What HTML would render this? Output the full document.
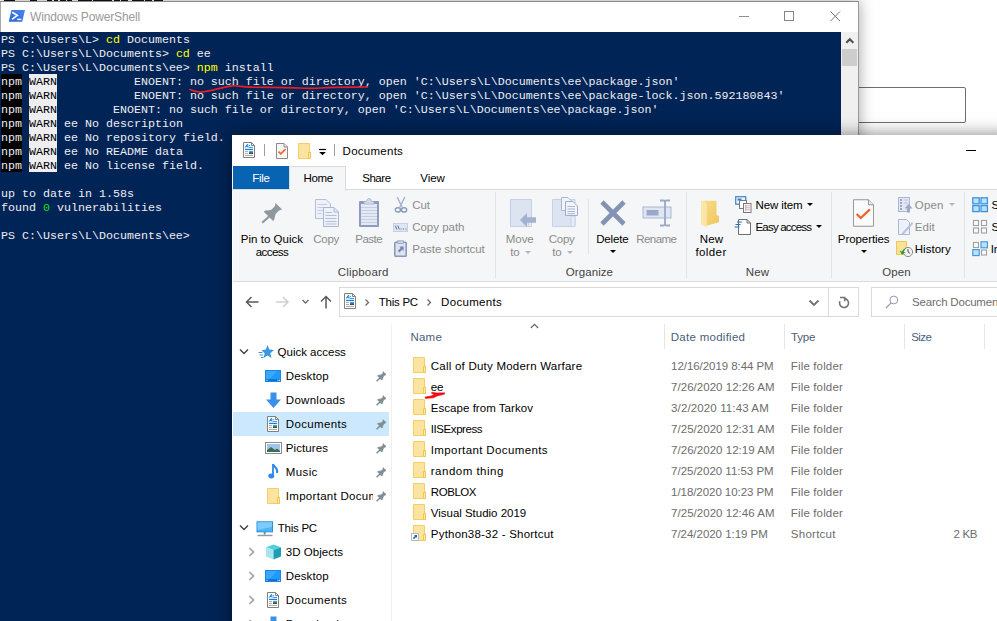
<!DOCTYPE html>
<html>
<head>
<meta charset="utf-8">
<title>Windows PowerShell</title>
<style>
html,body{margin:0;padding:0;}
body{width:997px;height:621px;overflow:hidden;background:#ffffff;position:relative;font-family:"Liberation Sans",sans-serif;font-size:12px;color:#000;}
.abs{position:absolute;}
/* ---------- background page ---------- */
#bgtext{left:0;top:-32px;font-size:40px;font-weight:bold;color:#000;letter-spacing:0;line-height:34px;white-space:nowrap;}
#bginput{left:850px;top:87px;width:114px;height:34px;border:1px solid #6e6e6e;border-radius:2px;background:#fff;}
/* ---------- powershell ---------- */
#ps{left:0;top:1px;width:859px;height:640px;background:#fff;box-shadow:0 0 14px rgba(0,0,0,.36);border-top:1px solid #8a8a8a;border-right:1px solid #9a9a9a;box-sizing:border-box;}
#pstitle{left:30px;top:8px;font-size:12px;letter-spacing:-0.15px;color:#999;white-space:nowrap;}
#con{left:0;top:30px;width:841px;height:600px;background:#012456;}
#con pre{margin:0;position:absolute;left:1px;top:1px;font-family:"Liberation Mono",monospace;font-size:11.67px;line-height:14px;color:#eeedf0;letter-spacing:0;}
#con .y{color:#ffff00;}
#con .n{color:#eeedf0;}
#con .w{color:#000;}
#con .g{color:#13e213;}
#sb{left:841px;top:30px;width:17px;height:600px;background:#f0f0f0;}
#sbthumb{left:1px;top:17px;width:15px;height:17px;background:#cdcdcd;}
/* ---------- explorer ---------- */
#ex{left:232px;top:135px;width:780px;height:500px;background:#fff;box-shadow:0 0 16px rgba(0,0,0,.5);}
.t{position:absolute;white-space:nowrap;line-height:16px;font-size:11.5px;color:#000;}
.g1{color:#8b8b8b;}
.wh{color:#fff;}
.lb{color:#444;}
.hd{color:#4c607a;}
.g2{color:#6d6d6d;}
.sep{position:absolute;width:1px;background:#e2e3e4;}
#ribbon{left:1px;top:54px;width:780px;height:91px;background:#f5f6f7;border-top:1px solid #dadbdc;border-bottom:1px solid #dadbdc;}
#tabfile{left:1px;top:31px;width:56px;height:23px;background:#0963b3;}
#tabhome{left:57px;top:31px;width:55px;height:24px;background:#f5f6f7;border:1px solid #dadbdc;border-bottom:none;}
.tri{position:absolute;width:0;height:0;border-left:3px solid transparent;border-right:3px solid transparent;border-top:3px solid #000;}
.tri.gr{border-top-color:#b5b5b5;}
#addr{left:107px;top:152px;width:520px;height:30px;border:1px solid #d9d9d9;box-sizing:border-box;}
#srch{left:639px;top:152px;width:200px;height:30px;border:1px solid #d9d9d9;box-sizing:border-box;}
#navsel{left:1px;top:277px;width:156px;height:24px;background:#cce8ff;}
</style>
</head>
<body>
<!-- background web page -->
<svg class="abs" style="left:0;top:0" width="170" height="2" viewBox="0 0 170 2"><path d="M4 0.5H15M30 0.5H37M47 0.5H52M54 0.5H58M60 0.5H66M67 0.5H72M78 0.5H92M93 0.5H112M114 0.5H120M121 0.5H128M132 0.5H144M145 0.5H152M154 0.5H163" stroke="#111" stroke-width="1.4"/></svg>
<div id="bginput" class="abs"></div>

<!-- PowerShell window -->
<div id="ps" class="abs">
  <svg class="abs" style="left:8px;top:7px" width="18" height="15" viewBox="0 0 18 15">
    <defs><linearGradient id="psg" x1="0" y1="1" x2="1" y2="0"><stop offset="0" stop-color="#2b66d6"/><stop offset="1" stop-color="#4a86ea"/></linearGradient></defs>
    <path d="M3.4 1H17L14.2 12.7H0.8Z" fill="url(#psg)"/>
    <path d="M4.2 3.2L9.3 6.4L4 10.4" fill="none" stroke="#fff" stroke-width="1.6"/>
    <path d="M9.2 10.4H13.4" stroke="#fff" stroke-width="1.4"/>
  </svg>
  <div class="abs" style="left:0;top:0;width:1px;height:30px;background:#a8a8a8"></div>
  <div id="pstitle" class="abs">Windows PowerShell</div>
  <svg class="abs" style="left:730px;top:0" width="128" height="30" viewBox="0 0 128 30">
    <path d="M9 14.5H19" stroke="#8c8c8c" stroke-width="1"/>
    <rect x="54.5" y="9.5" width="9" height="9" fill="none" stroke="#868686" stroke-width="1"/>
    <path d="M100.5 9.5L110 19M110 9.5L100.5 19" stroke="#7a7a7a" stroke-width="1"/>
  </svg>
  <div id="con" class="abs">
<div class="abs" style="left:1px;top:42px;width:21px;height:98px;background:#000"></div><div class="abs" style="left:29px;top:42px;width:28px;height:98px;background:#eeedf0"></div>
<pre>PS C:\Users\L&gt; <span class="y">cd</span> Documents
PS C:\Users\L\Documents&gt; <span class="y">cd</span> ee
PS C:\Users\L\Documents\ee&gt; <span class="y">npm</span> install
<span class="n">npm</span> <span class="w">WARN</span>           ENOENT: no such file or directory, open 'C:\Users\L\Documents\ee\package.json'
<span class="n">npm</span> <span class="w">WARN</span>           ENOENT: no such file or directory, open 'C:\Users\L\Documents\ee\package-lock.json.592180843'
<span class="n">npm</span> <span class="w">WARN</span>        ENOENT: no such file or directory, open 'C:\Users\L\Documents\ee\package.json'
<span class="n">npm</span> <span class="w">WARN</span> ee No description
<span class="n">npm</span> <span class="w">WARN</span> ee No repository field.
<span class="n">npm</span> <span class="w">WARN</span> ee No README data
<span class="n">npm</span> <span class="w">WARN</span> ee No license field.

up to date in 1.58s
found <span class="g">0</span> vulnerabilities

PS C:\Users\L\Documents\ee&gt; </pre>
    <svg class="abs" style="left:180px;top:44px" width="200" height="24" viewBox="0 0 200 24">
      <path d="M10 13.6C14 15.5 18 16.2 22 16C32 15 42 11 52 9.8C58 9.5 62 11 70 11.2C90 11.5 110 11.3 120 12C128 12.6 132 12.6 140 12C155 11 172 11.2 187.5 11" fill="none" stroke="#ec1c24" stroke-width="1.7" stroke-linecap="round"/>
    </svg>
  </div>
  <div id="sb" class="abs">
    <svg class="abs" style="left:0;top:0" width="16" height="17" viewBox="0 0 16 17"><path d="M5.3 10.8L8.8 7.3L12.3 10.8" fill="none" stroke="#505050" stroke-width="2.2"/></svg>
    <div id="sbthumb" class="abs"></div>
  </div>
</div>

<!-- Explorer window -->
<div id="ex" class="abs">
<svg width="0" height="0" style="position:absolute">
  <defs>
    <symbol id="i-doc" viewBox="0 0 12 16">
      <path d="M0.5 0.5H8.5L11.5 3.5V15.5H0.5Z" fill="#fff" stroke="#808080"/>
      <path d="M8.5 0.5V3.5H11.5" fill="none" stroke="#808080"/>
      <path d="M2.2 5.6L4.6 2L5.1 5.6M2.8 4.5H5" stroke="#1e90ea" stroke-width="1" fill="none"/>
      <rect x="6" y="2.9" width="1" height="1" fill="#2a96ea"/>
      <path d="M6 5.4H10" stroke="#2a96ea" stroke-width="1"/>
      <path d="M2 7.4H10" stroke="#0f7fe0" stroke-width="1.2"/>
      <path d="M2 9.4H5M2 11.4H5M2 13.4H10" stroke="#a6a6a6" stroke-width="1"/>
      <rect x="6" y="8.8" width="4" height="1.4" fill="#5a90ff"/><rect x="6" y="10.2" width="4" height="1.8" fill="#2f5a3a"/>
    </symbol>
    <symbol id="i-fold" viewBox="0 0 13 16">
      <path d="M0.5 0.5H11.5V9H12.5V15.5H0.5Z" fill="#fbe4a0" stroke="#f3cf63"/>
      <path d="M10.5 9.5H12.5V15.5H10.5Z" fill="#fde9ae" stroke="#f0c850"/>
    </symbol>
    <symbol id="i-pin" viewBox="0 0 22 22">
      <path d="M14.5 1.1L21.1 7.4L18 8.6L14.6 12L13.7 15.5Q13.2 19 12.1 18.9L8.7 15.6L2 21.6L0.4 20L6.9 14L3 10Q3.2 8.6 4.2 8.5L8 8.2L10.6 7.4L14 4Z" fill="#818e96" stroke="#818e96" stroke-width=".8" stroke-linejoin="round"/>
    </symbol>
  </defs>
</svg>
<!-- title bar -->
<svg class="abs" style="left:11px;top:7px" width="12" height="16"><use href="#i-doc"/></svg>
<div class="abs" style="left:32px;top:9px;width:1px;height:12px;background:#9d9d9d"></div>
<svg class="abs" style="left:44px;top:8px" width="12" height="16" viewBox="0 0 12 16">
  <path d="M0.5 0.5H8L11.5 4V15.5H0.5Z" fill="#f8f8f8" stroke="#8a8a8a"/>
  <path d="M8 0.5V4H11.5" fill="#e8e8e8" stroke="#8a8a8a"/>
  <path d="M2.5 8.6L4.8 10.8L9.6 6.2" fill="none" stroke="#f0622a" stroke-width="1.6"/>
</svg>
<svg class="abs" style="left:66px;top:8px" width="13" height="16"><use href="#i-fold"/></svg>
<svg class="abs" style="left:86px;top:13px" width="9" height="8" viewBox="0 0 9 8"><path d="M1 1.5H8" stroke="#000" stroke-width="1.2"/><path d="M1.2 4H7.8L4.5 7.3Z" fill="#000"/></svg>
<div class="abs" style="left:102px;top:9px;width:1px;height:12px;background:#9d9d9d"></div>
<div class="abs" style="left:734px;top:15px;width:10px;height:1px;background:#000"></div>
<!-- tabs + ribbon -->
<div id="ribbon" class="abs"></div>
<div id="tabfile" class="abs"></div>
<div id="tabhome" class="abs"></div>
<div class="sep" style="left:263px;top:57px;height:86px"></div>
<div class="sep" style="left:356px;top:64px;height:55px"></div>
<div class="sep" style="left:454px;top:57px;height:86px"></div>
<div class="sep" style="left:599px;top:57px;height:86px"></div>
<div class="sep" style="left:732px;top:57px;height:86px"></div>
<!-- pin to quick access -->
<svg class="abs" style="left:29px;top:67px" width="22" height="22" viewBox="0 0 22 22">
  <path d="M14.5 1.1L21.1 7.4L18 8.6L14.6 12L13.7 15.5Q13.2 19 12.1 18.9L8.6 15.5L1.9 21.5L0.5 20.1L7.1 14.1L3 10Q3.2 8.6 4.2 8.5L8 8.2L10.6 7.4L14 4Z" fill="#8e999f"/>
</svg>
<!-- copy -->
<svg class="abs" style="left:82px;top:63px" width="26" height="30" viewBox="0 0 26 30">
  <path d="M1.5 1.5H12L16.5 6V20.5H1.5Z" fill="#eef1f8" stroke="#b3bfda"/>
  <path d="M3.5 6.5H13M3.5 9.5H14M3.5 12.5H14M3.5 15.5H8" stroke="#c3cce2" stroke-width="1"/>
  <path d="M9.5 9.5H20L24.5 14V28.5H9.5Z" fill="#eef1f8" stroke="#a9b6d4"/>
  <path d="M20 9.5V14H24.5" fill="none" stroke="#a9b6d4"/>
  <path d="M11.5 14.5H18M11.5 17.5H22.5M11.5 20.5H22.5M11.5 23.5H22.5M11.5 26H22.5" stroke="#b3bfda" stroke-width="1"/>
</svg>
<!-- paste -->
<svg class="abs" style="left:126px;top:62px" width="22" height="31" viewBox="0 0 22 31">
  <rect x="1" y="4" width="20" height="26" rx="1" fill="#8e9cbe"/>
  <rect x="3" y="7" width="16" height="21" fill="#e4e9f5"/>
  <path d="M3 10.5H19M3 13.5H19M3 16.5H19M3 19.5H19M3 22.5H19M3 25.5H19" stroke="#c5cee3" stroke-width="1"/>
  <path d="M6 7V4.5H8.5Q9 1.5 11 1.5Q13 1.5 13.5 4.5H16V7Z" fill="#d5dbea" stroke="#a5b0cb" stroke-width=".8"/>
</svg>
<!-- cut -->
<svg class="abs" style="left:162px;top:61px" width="14" height="18" viewBox="0 0 14 18">
  <path d="M3.2 1L8.3 11.5M10.8 1L5.7 11.5" stroke="#a9b5cf" stroke-width="1.5" fill="none"/>
  <ellipse cx="3.9" cy="13.9" rx="2.6" ry="2.1" fill="none" stroke="#8c9aba" stroke-width="1.4"/>
  <ellipse cx="10.1" cy="13.9" rx="2.6" ry="2.1" fill="none" stroke="#8c9aba" stroke-width="1.4"/>
</svg>
<!-- copy path -->
<svg class="abs" style="left:161px;top:88px" width="15" height="9" viewBox="0 0 15 9">
  <rect x="0.5" y="0.5" width="14" height="8" fill="#dfe5f3" stroke="#c6cfe4"/>
  <path d="M2.3 2.6L3.8 6.4M4.8 2.6L6.3 6.4" stroke="#5d6f99" stroke-width="1"/><path d="M7.6 6H8.6M10 6H11M12.4 6H13.4" stroke="#5d6f99" stroke-width="1.2"/>
</svg>
<!-- paste shortcut -->
<svg class="abs" style="left:162px;top:105px" width="13" height="17" viewBox="0 0 13 17">
  <rect x="0.8" y="2.3" width="11.4" height="14" rx="1" fill="#dde3f1" stroke="#8796ba" stroke-width="1.5"/>
  <rect x="3.6" y="0.8" width="5.8" height="2.6" fill="#c9d1e4" stroke="#97a4c3" stroke-width=".8"/>
  <path d="M5.2 6.5H9.6V10.9L8.2 9.5L5.4 12.4L3.8 10.8L6.7 8Z" fill="#7686ad"/>
</svg>
<!-- move to -->
<svg class="abs" style="left:277px;top:63px" width="28" height="30" viewBox="0 0 28 30">
  <path d="M1.5 1.5H22.5V28.5H1.5Z" fill="#dce3f1" stroke="#c7d1e6"/>
  <path d="M19.5 20H22.5V28.5H19.5Z" fill="#e6ebf6" stroke="#c7d1e6"/>
  <path d="M11 22L18 15V19.2H27V24.8H18V29Z" fill="#a4b1d0"/>
</svg>
<div class="tri gr" style="left:293px;top:116px"></div>
<!-- copy to -->
<svg class="abs" style="left:319px;top:61px" width="28" height="32" viewBox="0 0 28 32">
  <path d="M1.5 3.5H24V30.5H1.5Z" fill="#dce3f1" stroke="#c7d1e6"/>
  <path d="M20 20H24V30.5H20Z" fill="#e6ebf6" stroke="#c7d1e6"/>
  <path d="M10.5 1.5H17L20 4.5V14.5H10.5Z" fill="#f2f4fa" stroke="#a9b6d4"/>
  <path d="M14.5 5.5H22L26.5 10V19.5H14.5Z" fill="#f2f4fa" stroke="#9fadce"/>
  <path d="M16.5 10.5H24M16.5 13H24M16.5 15.5H24M16.5 17.7H24" stroke="#aab7d5" stroke-width="1"/>
</svg>
<div class="tri gr" style="left:335px;top:116px"></div>
<!-- delete -->
<svg class="abs" style="left:367px;top:64px" width="28" height="28" viewBox="0 0 28 28">
  <path d="M3 3L25 25M25 3L3 25" stroke="#8492b4" stroke-width="4.6" fill="none"/>
</svg>
<div class="tri" style="left:378px;top:115px"></div>
<!-- rename -->
<svg class="abs" style="left:410px;top:64px" width="30" height="28" viewBox="0 0 30 28">
  <rect x="1" y="8" width="28" height="11" fill="#dfe5f3" stroke="#a9b6d4"/>
  <rect x="4.5" y="11" width="12" height="5.5" fill="#9aa8c9"/>
  <path d="M18 1.5H21.5Q23 1.5 23 3V25Q23 26.5 21.5 26.5H18M28 1.5H24.5Q23 1.5 23 3M23 25Q23 26.5 24.5 26.5H28" fill="none" stroke="#9aa8c9" stroke-width="1.8"/>
</svg>
<!-- new folder -->
<svg class="abs" style="left:468px;top:65px" width="20" height="28" viewBox="0 0 20 28">
  <defs><linearGradient id="nfg" x1="0" y1="0" x2="1" y2="1"><stop offset="0" stop-color="#f8dc8a"/><stop offset="1" stop-color="#efc75a"/></linearGradient></defs>
  <path d="M4 0.8H16.5V15L19 16V22.3L6.3 25.8V4Z" fill="url(#nfg)"/>
  <path d="M1 0.8H4L6.5 4.2V27.6L1 24.6Z" fill="#fbe6a8"/>
</svg>
<!-- new item -->
<svg class="abs" style="left:503px;top:61px" width="17" height="17" viewBox="0 0 17 17">
  <rect x="0.7" y="0.7" width="10" height="7.5" fill="#eaf3fb" stroke="#3d83c6" stroke-width="1.2"/>
  <rect x="2.5" y="2.5" width="4" height="2" fill="#3d83c6"/>
  <rect x="4.5" y="4.5" width="7" height="8" fill="#fff" stroke="#7a7a7a"/>
  <rect x="8.5" y="7.5" width="7.5" height="9" fill="#fff" stroke="#7a7a7a"/>
  <path d="M10 9.8H15M10 11.8H15M10 13.8H15" stroke="#e08a8a" stroke-width=".8"/><path d="M10.7 8.5V15.5" stroke="#8aa8e0" stroke-width=".7"/>
</svg>
<div class="tri" style="left:575px;top:68px"></div>
<!-- easy access -->
<svg class="abs" style="left:502px;top:83px" width="18" height="18" viewBox="0 0 18 18">
  <path d="M4.5 1.5H13L16.5 5V16.5H4.5Z" fill="#fff" stroke="#6e6e6e"/>
  <path d="M13 1.5V5H16.5" fill="none" stroke="#6e6e6e"/>
  <path d="M3 4H8M1.5 6.5H6.5M0.5 9H5.5" stroke="#2f6fb5" stroke-width="1.2"/>
</svg>
<div class="tri" style="left:584px;top:90px"></div>
<!-- properties -->
<svg class="abs" style="left:621px;top:64px" width="21" height="28" viewBox="0 0 23 30">
  <path d="M0.5 0.5H17L22.5 6V29.5H0.5Z" fill="#fbfbfb" stroke="#8a8a8a"/>
  <path d="M17 0.5V6H22.5" fill="#ececec" stroke="#8a8a8a"/>
  <path d="M4 16L8.5 20.5L18.5 11" fill="none" stroke="#f0622a" stroke-width="2.4"/>
</svg>
<div class="tri" style="left:629px;top:115px"></div>
<!-- open -->
<svg class="abs" style="left:666px;top:62px" width="15" height="16" viewBox="0 0 15 16">
  <rect x="0.5" y="0.5" width="11" height="14" fill="#e3e8f4" stroke="#a9b6d4"/>
  <path d="M2 3H4M2 6H4M2 9H4M2 12H4" stroke="#8494b8" stroke-width="1.6"/>
  <path d="M5.5 3H10M5.5 6H10" stroke="#b9c4dd" stroke-width="1.2"/>
  <path d="M10.5 7L14.5 11.5H12V15.5H9V11.5H6.5Z" fill="#9aa8c9"/>
</svg>
<div class="tri gr" style="left:717px;top:68px"></div>
<!-- edit -->
<svg class="abs" style="left:666px;top:84px" width="15" height="16" viewBox="0 0 15 16">
  <path d="M0.5 0.5H8.5L11.5 3.5V15.5H0.5Z" fill="#eef1f8" stroke="#a9b6d4"/>
  <path d="M14 3.5L5 13.5L3.5 15.5L6 14.5L14.8 4.5Z" fill="#c3cde3" stroke="#a9b6d4" stroke-width=".8"/>
</svg>
<!-- history -->
<svg class="abs" style="left:664px;top:106px" width="18" height="17" viewBox="0 0 18 17">
  <path d="M0.5 0.5H10.5V13.5H0.5Z" fill="#fbe29a" stroke="#f0c850"/>
  <circle cx="12" cy="11" r="4.6" fill="#f1f1f1" stroke="#8a8a8a"/>
  <path d="M12 8V11L14 12.3" stroke="#555" stroke-width="1" fill="none"/>
  <path d="M3.5 9.5L6 13.8L9.5 11.2L7.8 11C8 9.5 9 8 10.5 7.2C8.5 7.2 6.8 8.5 6 10.4Z" fill="#2da03a"/>
</svg>
<!-- select all / none / invert -->
<svg class="abs" style="left:740px;top:62px" width="17" height="16" viewBox="0 0 17 16">
  <g fill="#bfe0fa" stroke="#3a94e0" stroke-width="1.3"><rect x="0.8" y="0.8" width="6.4" height="6" /><rect x="9" y="0.8" width="6.4" height="6"/><rect x="0.8" y="8.6" width="6.4" height="6"/><rect x="9" y="8.6" width="6.4" height="6"/></g>
</svg>
<svg class="abs" style="left:740px;top:84px" width="17" height="16" viewBox="0 0 17 16">
  <g fill="#fafafa" stroke="#a0a0a0" stroke-width="1.1"><rect x="1.5" y="1.5" width="5" height="5" /><rect x="9.5" y="1.5" width="5" height="5"/><rect x="1.5" y="9" width="5" height="5"/><rect x="9.5" y="9" width="5" height="5"/></g>
</svg>
<svg class="abs" style="left:740px;top:106px" width="17" height="16" viewBox="0 0 17 16">
  <g stroke-width="1.1"><rect x="1.5" y="1.5" width="5" height="5" fill="#fafafa" stroke="#a0a0a0"/><rect x="9" y="0.8" width="6.4" height="6" fill="#bfe0fa" stroke="#3a94e0"/><rect x="0.8" y="8.6" width="6.4" height="6" fill="#bfe0fa" stroke="#3a94e0"/><rect x="9.5" y="9" width="5" height="5" fill="#fafafa" stroke="#a0a0a0"/></g>
</svg>
<!-- address row -->
<svg class="abs" style="left:13px;top:159px" width="90" height="16" viewBox="0 0 90 16">
  <path d="M13.5 8H1.5M6.5 3L1.5 8L6.5 13" fill="none" stroke="#5a5a5a" stroke-width="1.5"/>
  <path d="M31 8H43M38 3L43 8L38 13" fill="none" stroke="#cfcfcf" stroke-width="1.5"/>
  <path d="M57.5 6L60.5 9L63.5 6" fill="none" stroke="#6a6a6a" stroke-width="1.3"/>
  <path d="M81 14.5V2.5M76 7.5L81 2.5L86 7.5" fill="none" stroke="#5a5a5a" stroke-width="1.5"/>
</svg>
<div id="addr" class="abs"></div>
<div class="abs" style="left:596px;top:153px;width:1px;height:28px;background:#d9d9d9"></div>
<svg class="abs" style="left:112px;top:158px" width="12" height="16"><use href="#i-doc"/></svg>
<svg class="abs" style="left:132px;top:163px" width="6" height="9" viewBox="0 0 6 9"><path d="M1.5 1.5L4.5 4.5L1.5 7.5" fill="none" stroke="#6a6a6a" stroke-width="1.3"/></svg>
<svg class="abs" style="left:194px;top:163px" width="6" height="9" viewBox="0 0 6 9"><path d="M1.5 1.5L4.5 4.5L1.5 7.5" fill="none" stroke="#6a6a6a" stroke-width="1.3"/></svg>
<svg class="abs" style="left:576px;top:164px" width="12" height="9" viewBox="0 0 12 9"><path d="M1.5 1.5L6 6L10.5 1.5" fill="none" stroke="#707070" stroke-width="1.8"/></svg>
<svg class="abs" style="left:837px;top:160px;left:605px" width="14" height="14" viewBox="0 0 14 14">
  <path d="M7.8 3.6A4.5 4.5 0 1 1 2.9 6.3" fill="none" stroke="#727272" stroke-width="1.6"/>
  <path d="M3 2.6H7.7V6.2" fill="none" stroke="#727272" stroke-width="1.5"/>
</svg>
<div id="srch" class="abs"></div>
<svg class="abs" style="left:653px;top:160px" width="14" height="14" viewBox="0 0 14 14">
  <circle cx="8.8" cy="5" r="3.9" fill="none" stroke="#9696b0" stroke-width="1"/><path d="M6 7.8L1 13" stroke="#9696b0" stroke-width="1.1"/>
</svg>
<!-- column headers -->
<svg class="abs" style="left:298px;top:188px" width="9" height="6" viewBox="0 0 9 6"><path d="M0.8 5L4.5 1.3L8.2 5" fill="none" stroke="#666" stroke-width="1.2"/></svg>
<div class="abs" style="left:432px;top:189px;width:1px;height:25px;background:#e5e5e5"></div>
<div class="abs" style="left:552px;top:189px;width:1px;height:25px;background:#e5e5e5"></div>
<div class="abs" style="left:672px;top:189px;width:1px;height:25px;background:#e5e5e5"></div>
<div class="abs" style="left:752px;top:189px;width:1px;height:25px;background:#e5e5e5"></div>
<!-- nav pane -->
<div class="abs" style="left:159px;top:189px;width:1px;height:320px;background:#f0f0f0"></div>
<div id="navsel" class="abs"></div>
<svg class="abs" style="left:7px;top:213px" width="10" height="8" viewBox="0 0 10 8"><path d="M1 1.5L5 5.5L9 1.5" fill="none" stroke="#404040" stroke-width="1.4"/></svg>
<svg class="abs" style="left:7px;top:389px" width="10" height="8" viewBox="0 0 10 8"><path d="M1 1.5L5 5.5L9 1.5" fill="none" stroke="#404040" stroke-width="1.4"/></svg>
<svg class="abs" style="left:16px;top:412px" width="7" height="10" viewBox="0 0 7 10"><path d="M1.5 1L5.5 5L1.5 9" fill="none" stroke="#a3a3a3" stroke-width="1.7"/></svg>
<svg class="abs" style="left:16px;top:436px" width="7" height="10" viewBox="0 0 7 10"><path d="M1.5 1L5.5 5L1.5 9" fill="none" stroke="#a3a3a3" stroke-width="1.7"/></svg>
<svg class="abs" style="left:16px;top:460px" width="7" height="10" viewBox="0 0 7 10"><path d="M1.5 1L5.5 5L1.5 9" fill="none" stroke="#a3a3a3" stroke-width="1.7"/></svg>
<svg class="abs" style="left:16px;top:484px" width="7" height="10" viewBox="0 0 7 10"><path d="M1.5 1L5.5 5L1.5 9" fill="none" stroke="#a3a3a3" stroke-width="1.7"/></svg>
<!-- quick access star -->
<svg class="abs" style="left:26px;top:209px" width="16" height="16" viewBox="0 0 16 16">
  <path d="M9.5 1L11.3 5.6L16 6L12.3 9.2L13.5 14L9.5 11.4L5.5 14L6.7 9.2L3.5 6.3L7.8 5.6Z" fill="#3a96e8"/>
  <path d="M0.5 8.5H4.5M1.5 11H5M3 13.5H5.5" stroke="#3a96e8" stroke-width="1.1"/>
</svg>
<!-- desktop -->
<svg class="abs" style="left:33px;top:235px" width="16" height="12" viewBox="0 0 16 12"><rect x="0.5" y="0.5" width="15" height="11" fill="#1e9afc" stroke="#1a84e4"/><path d="M1 1H12L5 9H1Z" fill="#3aa6ff"/><path d="M1 10H15" stroke="#1573cc" stroke-width="2"/><path d="M1.5 10.3H2.5M12.5 10.3H13.5M14 10.3H15" stroke="#fff" stroke-width="1"/></svg>
<!-- downloads -->
<svg class="abs" style="left:33px;top:257px" width="17" height="17" viewBox="0 0 17 17"><path d="M5.5 0.5H11.5V7.5H16L8.5 16L1 7.5H5.5Z" fill="#3a90e8"/></svg>
<!-- documents -->
<svg class="abs" style="left:35px;top:281px" width="12" height="16"><use href="#i-doc"/></svg>
<!-- pictures -->
<svg class="abs" style="left:33px;top:307px" width="17" height="12" viewBox="0 0 17 12"><rect x="0.5" y="0.5" width="16" height="11" fill="#fff" stroke="#8a8a8a"/><rect x="2" y="2" width="13" height="8" fill="#9cc7ea"/><path d="M2 8L6 5L10 8L12 6.5L15 9V10H2Z" fill="#3d6b58"/></svg>
<!-- music -->
<svg class="abs" style="left:36px;top:328px" width="12" height="17" viewBox="0 0 12 17"><path d="M5 1V12.5" stroke="#2d8ae6" stroke-width="1.8"/><path d="M5 1C6 4 10.5 5 9 10" fill="none" stroke="#2d8ae6" stroke-width="2"/><ellipse cx="3.3" cy="13" rx="3" ry="2.4" fill="#2d8ae6"/></svg>
<!-- important docs folder -->
<svg class="abs" style="left:35px;top:353px" width="13" height="16"><use href="#i-fold"/></svg>
<!-- pins -->
<svg class="abs" style="left:143.5px;top:236px" width="10.8" height="10.8"><use href="#i-pin"/></svg>
<svg class="abs" style="left:143.5px;top:260px" width="10.8" height="10.8"><use href="#i-pin"/></svg>
<svg class="abs" style="left:143.5px;top:284px" width="10.8" height="10.8"><use href="#i-pin"/></svg>
<svg class="abs" style="left:143.5px;top:308px" width="10.8" height="10.8"><use href="#i-pin"/></svg>
<svg class="abs" style="left:143.5px;top:332px" width="10.8" height="10.8"><use href="#i-pin"/></svg>
<svg class="abs" style="left:143.5px;top:356px" width="10.8" height="10.8"><use href="#i-pin"/></svg>
<span class="t" style="left:53.8px;top:353px;width:86.9px;overflow:hidden;letter-spacing:0.29px">Important Documents</span>
<!-- this pc -->
<svg class="abs" style="left:24px;top:386px" width="18" height="16" viewBox="0 0 18 16"><rect x="1" y="0.8" width="15.5" height="10" fill="#4db4f5" stroke="#2a8edc" stroke-width="1"/><path d="M1.5 1.3H16V6L1.5 9Z" fill="#7ccbfa"/><path d="M8.7 11V13.5" stroke="#7a8a9a" stroke-width="2"/><path d="M1.5 14.5H16.5" stroke="#8a9aa8" stroke-width="1.4"/></svg>
<!-- 3d objects -->
<svg class="abs" style="left:33px;top:409px" width="17" height="16" viewBox="0 0 17 16"><path d="M8.5 0.5L16 3.2L8.5 6L1 3.2Z" fill="#4fd0e0"/><path d="M1 3.2L8.5 6V15.5L1 12.5Z" fill="#a6e6ee"/><path d="M16 3.2L8.5 6V15.5L16 12.5Z" fill="#1f9db5"/></svg>
<svg class="abs" style="left:33px;top:435px" width="16" height="12" viewBox="0 0 16 12"><rect x="0.5" y="0.5" width="15" height="11" fill="#1e9afc" stroke="#1a84e4"/><path d="M1 1H12L5 9H1Z" fill="#3aa6ff"/><path d="M1 10H15" stroke="#1573cc" stroke-width="2"/><path d="M1.5 10.3H2.5M12.5 10.3H13.5M14 10.3H15" stroke="#fff" stroke-width="1"/></svg>
<svg class="abs" style="left:35px;top:457px" width="12" height="16"><use href="#i-doc"/></svg>
<svg class="abs" style="left:33px;top:481px" width="17" height="17" viewBox="0 0 17 17"><path d="M5.5 0.5H11.5V7.5H16L8.5 16L1 7.5H5.5Z" fill="#3a90e8"/></svg>
<!-- file list icons -->
<svg class="abs" style="left:181px;top:222px" width="13" height="16"><use href="#i-fold"/></svg>
<svg class="abs" style="left:181px;top:243px" width="13" height="16"><use href="#i-fold"/></svg>
<svg class="abs" style="left:181px;top:264px" width="13" height="16"><use href="#i-fold"/></svg>
<svg class="abs" style="left:181px;top:285px" width="13" height="16"><use href="#i-fold"/></svg>
<svg class="abs" style="left:181px;top:306px" width="13" height="16"><use href="#i-fold"/></svg>
<svg class="abs" style="left:181px;top:327px" width="13" height="16"><use href="#i-fold"/></svg>
<svg class="abs" style="left:181px;top:348px" width="13" height="16"><use href="#i-fold"/></svg>
<svg class="abs" style="left:181px;top:369px" width="13" height="16"><use href="#i-fold"/></svg>
<svg class="abs" style="left:181px;top:390px" width="13" height="16"><use href="#i-fold"/></svg>
<svg class="abs" style="left:179px;top:398px" width="8" height="8" viewBox="0 0 8 8"><rect x="0.5" y="0.5" width="7" height="7" fill="#fff" stroke="#b4b9c2"/><path d="M3 2H6V5L5 4L3 6.2L1.9 5.1L4 3Z" fill="#2a5db0"/></svg>
<!-- red annotation under ee -->
<svg class="abs" style="left:188px;top:252px" width="30" height="14" viewBox="0 0 30 14"><path d="M11.8 5.2L17 6L24.6 5.8L24.4 7.2L17 9L13.5 10.8L5.4 11.4L5 10L11 9L14.5 7.6L11.6 6.6Z" fill="#f20a10" stroke="#f20a10" stroke-width=".6" stroke-linejoin="round"/></svg>
<!-- TEXT-START -->
<span class="t" style="left:110.6px;top:8px;letter-spacing:0.26px">Documents</span>
<span class="t wh" style="left:20.3px;top:35px;letter-spacing:-0.31px">File</span>
<span class="t" style="left:71.4px;top:35px;letter-spacing:-0.32px">Home</span>
<span class="t" style="left:130.2px;top:35px;letter-spacing:-0.46px">Share</span>
<span class="t" style="left:188.3px;top:35px;letter-spacing:-0.03px">View</span>
<span class="t" style="left:8.8px;top:96px;letter-spacing:0.02px">Pin to Quick</span>
<span class="t" style="left:23.8px;top:109px;letter-spacing:-0.58px">access</span>
<span class="t g1" style="left:81.3px;top:96px;letter-spacing:-0.26px">Copy</span>
<span class="t g1" style="left:123.3px;top:96px;letter-spacing:-0.52px">Paste</span>
<span class="t g1" style="left:180.2px;top:62px;letter-spacing:-0.10px">Cut</span>
<span class="t g1" style="left:180.2px;top:84px;letter-spacing:-0.02px">Copy path</span>
<span class="t g1" style="left:180.2px;top:106px;letter-spacing:-0.07px">Paste shortcut</span>
<span class="t g1" style="left:273.8px;top:96px;letter-spacing:-0.06px">Move</span>
<span class="t g1" style="left:278.2px;top:109px;letter-spacing:-0.10px">to</span>
<span class="t g1" style="left:316.8px;top:96px;letter-spacing:-0.29px">Copy</span>
<span class="t g1" style="left:320.2px;top:109px;letter-spacing:-0.10px">to</span>
<span class="t" style="left:364.2px;top:96px;letter-spacing:-0.16px">Delete</span>
<span class="t g1" style="left:404.2px;top:96px;letter-spacing:-0.53px">Rename</span>
<span class="t" style="left:467.8px;top:96px;letter-spacing:0.09px">New</span>
<span class="t" style="left:463.4px;top:109px;letter-spacing:0.42px">folder</span>
<span class="t" style="left:523.5px;top:62px;letter-spacing:-0.12px">New item</span>
<span class="t" style="left:523.5px;top:84px;letter-spacing:-0.81px">Easy access</span>
<span class="t" style="left:605.8px;top:96px;letter-spacing:-0.07px">Properties</span>
<span class="t g1" style="left:682.8px;top:62px;letter-spacing:0.14px">Open</span>
<span class="t g1" style="left:682.8px;top:84px;letter-spacing:0.02px">Edit</span>
<span class="t" style="left:682.8px;top:106px;letter-spacing:0.02px">History</span>
<span class="t" style="left:759.4px;top:62px;letter-spacing:-0.20px">Select all</span>
<span class="t" style="left:759.4px;top:84px;letter-spacing:-0.20px">Select none</span>
<span class="t" style="left:758.8px;top:106px;letter-spacing:-0.20px">Invert selection</span>
<span class="t lb" style="left:105.8px;top:129px;letter-spacing:0.17px">Clipboard</span>
<span class="t lb" style="left:333.8px;top:129px;letter-spacing:0.08px">Organize</span>
<span class="t lb" style="left:513.8px;top:129px;letter-spacing:0.09px">New</span>
<span class="t lb" style="left:650.2px;top:129px;letter-spacing:0.09px">Open</span>
<span class="t" style="left:146.8px;top:159px;letter-spacing:-0.26px">This PC</span>
<span class="t" style="left:209.1px;top:159px;letter-spacing:0.31px">Documents</span>
<span class="t g2" style="left:680.1px;top:159px;letter-spacing:-0.20px">Search Documents</span>
<span class="t hd" style="left:178.4px;top:194px;letter-spacing:0.25px">Name</span>
<span class="t hd" style="left:438.8px;top:194px;letter-spacing:0.27px">Date modified</span>
<span class="t hd" style="left:559.1px;top:194px;letter-spacing:-0.23px">Type</span>
<span class="t hd" style="left:679.2px;top:194px;letter-spacing:-0.54px">Size</span>
<span class="t" style="left:45.6px;top:209px;letter-spacing:-0.01px">Quick access</span>
<span class="t" style="left:53.8px;top:233px;letter-spacing:0.10px">Desktop</span>
<span class="t" style="left:53.8px;top:257px;letter-spacing:0.29px">Downloads</span>
<span class="t" style="left:53.8px;top:281px;letter-spacing:0.35px">Documents</span>
<span class="t" style="left:53.8px;top:305px;letter-spacing:0.09px">Pictures</span>
<span class="t" style="left:53.8px;top:329px;letter-spacing:0.37px">Music</span>
<span class="t" style="left:45.8px;top:385px;letter-spacing:-0.26px">This PC</span>
<span class="t" style="left:53.8px;top:409px;letter-spacing:0.04px">3D Objects</span>
<span class="t" style="left:53.8px;top:433px;letter-spacing:0.10px">Desktop</span>
<span class="t" style="left:53.8px;top:457px;letter-spacing:0.35px">Documents</span>
<span class="t" style="left:53.8px;top:481px;letter-spacing:0.29px">Downloads</span>
<span class="t" style="left:198.8px;top:223px;letter-spacing:0.23px">Call of Duty Modern Warfare</span>
<span class="t" style="left:198.8px;top:244px;letter-spacing:-0.25px">ee</span>
<span class="t" style="left:198.8px;top:265px;letter-spacing:0.04px">Escape from Tarkov</span>
<span class="t" style="left:198.8px;top:286px;letter-spacing:-0.43px">IISExpress</span>
<span class="t" style="left:198.8px;top:307px;letter-spacing:0.38px">Important Documents</span>
<span class="t" style="left:198.8px;top:328px;letter-spacing:0.49px">random thing</span>
<span class="t" style="left:198.8px;top:349px;letter-spacing:-0.44px">ROBLOX</span>
<span class="t" style="left:198.8px;top:370px;letter-spacing:-0.02px">Visual Studio 2019</span>
<span class="t" style="left:198.8px;top:391px;letter-spacing:0.21px">Python38-32 - Shortcut</span>
<span class="t g2" style="left:439.1px;top:223px;letter-spacing:-0.06px">12/16/2019 8:44 PM</span>
<span class="t g2" style="left:439.1px;top:244px;letter-spacing:0.03px">7/26/2020 12:26 AM</span>
<span class="t g2" style="left:439.1px;top:265px;letter-spacing:0.12px">3/2/2020 11:43 AM</span>
<span class="t g2" style="left:439.1px;top:286px;letter-spacing:0.03px">7/25/2020 12:31 AM</span>
<span class="t g2" style="left:439.1px;top:307px;letter-spacing:0.03px">7/26/2020 12:19 AM</span>
<span class="t g2" style="left:439.1px;top:328px;letter-spacing:-0.01px">7/25/2020 11:53 PM</span>
<span class="t g2" style="left:439.1px;top:349px;letter-spacing:-0.06px">1/18/2020 10:23 PM</span>
<span class="t g2" style="left:439.1px;top:370px;letter-spacing:0.03px">7/25/2020 12:46 AM</span>
<span class="t g2" style="left:439.1px;top:391px;letter-spacing:-0.03px">7/24/2020 1:19 PM</span>
<span class="t g2" style="left:558.8px;top:223px;letter-spacing:0.15px">File folder</span>
<span class="t g2" style="left:558.8px;top:244px;letter-spacing:0.15px">File folder</span>
<span class="t g2" style="left:558.8px;top:265px;letter-spacing:0.15px">File folder</span>
<span class="t g2" style="left:558.8px;top:286px;letter-spacing:0.15px">File folder</span>
<span class="t g2" style="left:558.8px;top:307px;letter-spacing:0.15px">File folder</span>
<span class="t g2" style="left:558.8px;top:328px;letter-spacing:0.15px">File folder</span>
<span class="t g2" style="left:558.8px;top:349px;letter-spacing:0.15px">File folder</span>
<span class="t g2" style="left:558.8px;top:370px;letter-spacing:0.15px">File folder</span>
<span class="t g2" style="left:558.8px;top:391px;letter-spacing:0.26px">Shortcut</span>
<span class="t g2" style="left:721.6px;top:391px;letter-spacing:-0.36px">2 KB</span>
<!-- TEXT-END -->
</div>
</body>
</html>
